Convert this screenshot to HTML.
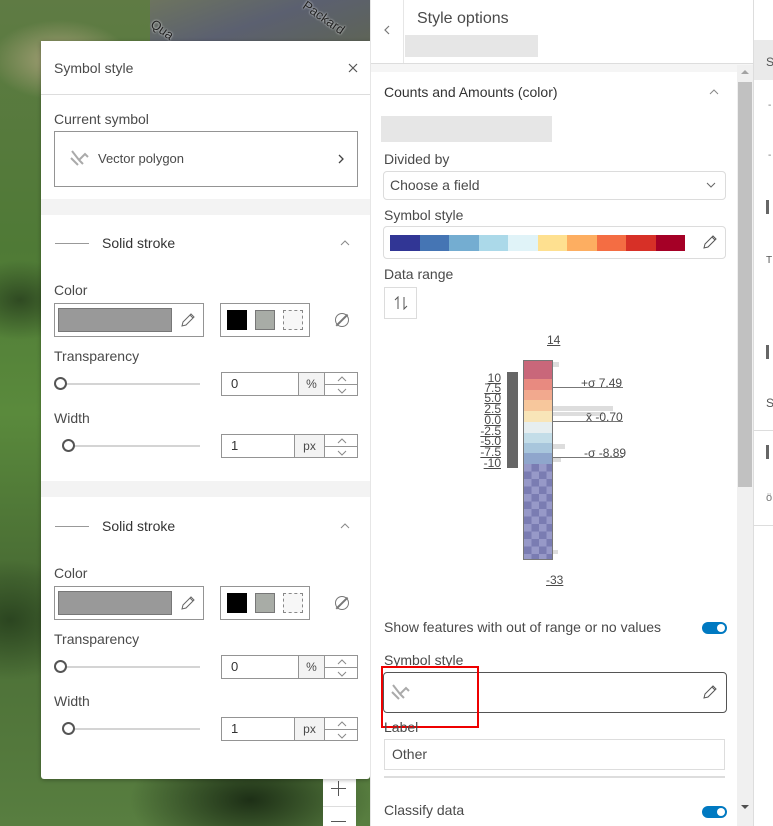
<!DOCTYPE html>
<html><head><meta charset="utf-8"><style>
*{box-sizing:border-box;margin:0;padding:0}
body{width:773px;height:826px;overflow:hidden;position:relative;font-family:"Liberation Sans",sans-serif;color:#4a4a4a;font-size:14px;background:#4d6b36}
.a{position:absolute}
svg{position:absolute}
.map{left:0;top:0;width:370px;height:826px;background:
radial-gradient(ellipse 60px 40px at 20px 300px,#2f4a22,transparent),
radial-gradient(ellipse 80px 60px at 10px 620px,#2b4520,transparent),
radial-gradient(ellipse 120px 60px at 250px 800px,#1d2f16,transparent),
radial-gradient(ellipse 70px 40px at 60px 60px,#a9a27a,transparent),
linear-gradient(180deg,#5f7b44 0%,#4f7a36 30%,#5a8a3c 50%,#496c34 70%,#587e40 100%)}
.houses{left:150px;top:0;width:220px;height:42px;background:linear-gradient(160deg,#6d745f,#5b6070 50%,#5e6457)}
.panel{left:41px;top:41px;width:329px;height:738px;background:#fff;box-shadow:0 1px 4px rgba(0,0,0,.3);border-radius:0 0 3px 3px}
.band{background:#f3f3f3;left:0;width:329px;height:16px}
.lbl{font-size:14px;color:#4a4a4a}
.box{border:1px solid #949494}
.right{left:370px;top:0;width:383px;height:826px;background:#fff;border-left:1px solid #e6e6e6}
.strip{left:753px;top:0;width:20px;height:826px;background:#fff;border-left:1px solid #ddd}
.rl{font-size:14px;color:#4a4a4a}
.sel{border:1px solid #dcdcdc;border-radius:4px}
.tog{width:25px;height:12px;border-radius:6px;background:#0079c1}
.tog:after{content:"";position:absolute;right:2px;top:2px;width:8px;height:8px;border-radius:50%;background:#fff}
.hl{font-size:12px;color:#4a4a4a;text-decoration:underline;text-align:right;width:40px;line-height:10px}
</style></head><body>
<div class="a map"></div>
<div class="a houses"></div>
<div class="a" style="left:300px;top:10px;font-size:13px;color:#222;transform:rotate(35deg);text-shadow:0 0 2px #fff">Packard</div>
<div class="a" style="left:150px;top:22px;font-size:13px;color:#222;transform:rotate(35deg);text-shadow:0 0 2px #fff">Qua</div>
<div class="a" style="left:323px;top:779px;width:33px;height:47px;background:#fff"></div>
<div class="a" style="left:323px;top:806px;width:33px;height:1px;background:#ddd"></div>
<div class="a" style="left:331px;top:788px;width:15px;height:1px;background:#555"></div>
<div class="a" style="left:338px;top:781px;width:1px;height:15px;background:#555"></div>
<div class="a" style="left:331px;top:821px;width:15px;height:1px;background:#555"></div>

<div class="a panel">
 <div class="a lbl" style="left:13px;top:19px">Symbol style</div>
 <svg style="left:307px;top:22px" width="10" height="10"><path d="M1 1 L9 9 M9 1 L1 9" stroke="#555" stroke-width="1.2"/></svg>
 <div class="a" style="left:0;top:53px;width:329px;height:1px;background:#ddd"></div>
 <div class="a lbl" style="left:13px;top:70px">Current symbol</div>
 <div class="a box" style="left:13px;top:90px;width:304px;height:56px"></div>
 <svg style="left:28px;top:108px" width="20" height="18"><path d="M3 2 L10 11 M2 9 L9 16 M10 11 L16 5 L19 8 M10 11 L14 15" stroke="#aaa" stroke-width="2" fill="none"/></svg>
 <div class="a lbl" style="left:57px;top:110px;font-size:13px">Vector polygon</div>
 <svg style="left:297px;top:113px" width="6" height="10"><path d="M1 1 L5 5 L1 9" stroke="#444" stroke-width="1.3" fill="none"/></svg>
 <div class="a band" style="top:158px"></div>

 <div class="a" style="left:14px;top:202px;width:34px;height:1px;background:#999"></div>
 <div class="a lbl" style="left:61px;top:194px;color:#333">Solid stroke</div>
 <svg style="left:299px;top:199px" width="10" height="6"><path d="M1 5 L5 1 L9 5" stroke="#888" fill="none"/></svg>
 <div class="a lbl" style="left:13px;top:241px">Color</div>
 <div class="a box" style="left:13px;top:262px;width:150px;height:34px"></div>
 <div class="a" style="left:17px;top:267px;width:114px;height:24px;background:#999;border:1px solid #777"></div>
 <svg style="left:139px;top:271px" width="16" height="16"><path d="M2 14 L3 10 L11 2 L14 5 L6 13 Z M10 3 L13 6" stroke="#666" fill="none"/></svg>
 <div class="a box" style="left:179px;top:262px;width:90px;height:34px"></div>
 <div class="a" style="left:186px;top:269px;width:20px;height:20px;background:#000"></div>
 <div class="a" style="left:214px;top:269px;width:20px;height:20px;background:#a8aca6;border:1px solid #777"></div>
 <div class="a" style="left:242px;top:269px;width:20px;height:20px;border:1px dashed #888;background:#f7f7f7"></div>
 <div class="a" style="left:294px;top:272px;width:14px;height:14px;border:1.5px solid #777;border-radius:50%"></div>
 <div class="a" style="left:300px;top:271px;width:1.5px;height:16px;background:#777;transform:rotate(45deg)"></div>
 <div class="a lbl" style="left:13px;top:307px">Transparency</div>
 <div class="a" style="left:24px;top:342px;width:135px;height:2px;background:#d4d4d4"></div>
 <div class="a" style="left:13px;top:336px;width:13px;height:13px;border:2px solid #555;border-radius:50%;background:#fff"></div>
 <div class="a box" style="left:180px;top:331px;width:137px;height:24px"></div>
 <div class="a" style="left:190px;top:335px;font-size:13px;color:#333">0</div>
 <div class="a" style="left:257px;top:332px;width:27px;height:22px;background:#f3f3f3;border-left:1px solid #949494;border-right:1px solid #949494;font-size:12px;text-align:center;line-height:22px">%</div>
 <div class="a" style="left:284px;top:343px;width:33px;height:1px;background:#949494"></div>
 <svg style="left:296px;top:335px" width="10" height="6"><path d="M1 5 L5 1 L9 5" stroke="#888" fill="none"/></svg>
 <svg style="left:296px;top:347px" width="10" height="6"><path d="M1 1 L5 5 L9 1" stroke="#888" fill="none"/></svg>
 <div class="a lbl" style="left:13px;top:369px">Width</div>
 <div class="a" style="left:30px;top:404px;width:129px;height:2px;background:#d4d4d4"></div>
 <div class="a" style="left:21px;top:398px;width:13px;height:13px;border:2px solid #555;border-radius:50%;background:#fff"></div>
 <div class="a box" style="left:180px;top:393px;width:137px;height:24px"></div>
 <div class="a" style="left:190px;top:397px;font-size:13px;color:#333">1</div>
 <div class="a" style="left:253px;top:394px;width:31px;height:22px;background:#f3f3f3;border-left:1px solid #949494;border-right:1px solid #949494;font-size:12px;text-align:center;line-height:22px">px</div>
 <div class="a" style="left:284px;top:405px;width:33px;height:1px;background:#949494"></div>
 <svg style="left:296px;top:397px" width="10" height="6"><path d="M1 5 L5 1 L9 5" stroke="#888" fill="none"/></svg>
 <svg style="left:296px;top:409px" width="10" height="6"><path d="M1 1 L5 5 L9 1" stroke="#888" fill="none"/></svg>
 <div class="a band" style="top:440px"></div>

 <div class="a" style="left:14px;top:485px;width:34px;height:1px;background:#999"></div>
 <div class="a lbl" style="left:61px;top:477px;color:#333">Solid stroke</div>
 <svg style="left:299px;top:482px" width="10" height="6"><path d="M1 5 L5 1 L9 5" stroke="#888" fill="none"/></svg>
 <div class="a lbl" style="left:13px;top:524px">Color</div>
 <div class="a box" style="left:13px;top:545px;width:150px;height:34px"></div>
 <div class="a" style="left:17px;top:550px;width:114px;height:24px;background:#999;border:1px solid #777"></div>
 <svg style="left:139px;top:554px" width="16" height="16"><path d="M2 14 L3 10 L11 2 L14 5 L6 13 Z M10 3 L13 6" stroke="#666" fill="none"/></svg>
 <div class="a box" style="left:179px;top:545px;width:90px;height:34px"></div>
 <div class="a" style="left:186px;top:552px;width:20px;height:20px;background:#000"></div>
 <div class="a" style="left:214px;top:552px;width:20px;height:20px;background:#a8aca6;border:1px solid #777"></div>
 <div class="a" style="left:242px;top:552px;width:20px;height:20px;border:1px dashed #888;background:#f7f7f7"></div>
 <div class="a" style="left:294px;top:555px;width:14px;height:14px;border:1.5px solid #777;border-radius:50%"></div>
 <div class="a" style="left:300px;top:554px;width:1.5px;height:16px;background:#777;transform:rotate(45deg)"></div>
 <div class="a lbl" style="left:13px;top:590px">Transparency</div>
 <div class="a" style="left:24px;top:625px;width:135px;height:2px;background:#d4d4d4"></div>
 <div class="a" style="left:13px;top:619px;width:13px;height:13px;border:2px solid #555;border-radius:50%;background:#fff"></div>
 <div class="a box" style="left:180px;top:614px;width:137px;height:24px"></div>
 <div class="a" style="left:190px;top:618px;font-size:13px;color:#333">0</div>
 <div class="a" style="left:257px;top:615px;width:27px;height:22px;background:#f3f3f3;border-left:1px solid #949494;border-right:1px solid #949494;font-size:12px;text-align:center;line-height:22px">%</div>
 <div class="a" style="left:284px;top:626px;width:33px;height:1px;background:#949494"></div>
 <svg style="left:296px;top:618px" width="10" height="6"><path d="M1 5 L5 1 L9 5" stroke="#888" fill="none"/></svg>
 <svg style="left:296px;top:630px" width="10" height="6"><path d="M1 1 L5 5 L9 1" stroke="#888" fill="none"/></svg>
 <div class="a lbl" style="left:13px;top:652px">Width</div>
 <div class="a" style="left:30px;top:687px;width:129px;height:2px;background:#d4d4d4"></div>
 <div class="a" style="left:21px;top:681px;width:13px;height:13px;border:2px solid #555;border-radius:50%;background:#fff"></div>
 <div class="a box" style="left:180px;top:676px;width:137px;height:24px"></div>
 <div class="a" style="left:190px;top:680px;font-size:13px;color:#333">1</div>
 <div class="a" style="left:253px;top:677px;width:31px;height:22px;background:#f3f3f3;border-left:1px solid #949494;border-right:1px solid #949494;font-size:12px;text-align:center;line-height:22px">px</div>
 <div class="a" style="left:284px;top:688px;width:33px;height:1px;background:#949494"></div>
 <svg style="left:296px;top:680px" width="10" height="6"><path d="M1 5 L5 1 L9 5" stroke="#888" fill="none"/></svg>
 <svg style="left:296px;top:692px" width="10" height="6"><path d="M1 1 L5 5 L9 1" stroke="#888" fill="none"/></svg>
</div>

<div class="a right">
 <div class="a" style="left:32px;top:0;width:1px;height:64px;background:#e6e6e6"></div>
 <svg style="left:13px;top:25px" width="6" height="10"><path d="M5 1 L1 5 L5 9" stroke="#777" stroke-width="1.2" fill="none"/></svg>
 <div class="a" style="left:46px;top:10px;font-size:16px;color:#4a4a4a">Style options</div>
 <div class="a" style="left:34px;top:35px;width:133px;height:22px;background:#e6e6e6"></div>
 <div class="a" style="left:0;top:63px;width:383px;height:9px;background:#f5f5f5;border-top:1px solid #ddd"></div>
 <div class="a" style="left:366px;top:65px;width:16px;height:761px;background:#f0f0f0"></div>
 <div class="a" style="left:367px;top:82px;width:14px;height:405px;background:#c1c1c1"></div>
 <div class="a" style="left:370px;top:70px;border:4px solid transparent;border-bottom:4px solid #a3a3a3;border-top:0"></div>
 <div class="a" style="left:370px;top:805px;border:4px solid transparent;border-top:4px solid #505050;border-bottom:0"></div>

 <div class="a rl" style="left:13px;top:84px;color:#333">Counts and Amounts (color)</div>
 <svg style="left:338px;top:89px" width="10" height="6"><path d="M1 5 L5 1 L9 5" stroke="#888" fill="none"/></svg>
 <div class="a" style="left:10px;top:116px;width:171px;height:26px;background:#e6e6e6"></div>
 <div class="a rl" style="left:13px;top:151px">Divided by</div>
 <div class="a sel" style="left:12px;top:171px;width:343px;height:29px"></div>
 <div class="a" style="left:19px;top:177px;font-size:14px;color:#4a4a4a">Choose a field</div>
 <svg style="left:335px;top:182px" width="10" height="6"><path d="M1 1 L5 5 L9 1" stroke="#666" fill="none"/></svg>
 <div class="a rl" style="left:13px;top:207px">Symbol style</div>
 <div class="a sel" style="left:12px;top:226px;width:343px;height:33px"></div>
 <div class="a" style="left:19px;top:235px;width:295px;height:16px;display:flex">
  <div style="flex:1;background:#313695"></div><div style="flex:1;background:#4575b4"></div><div style="flex:1;background:#74add1"></div><div style="flex:1;background:#abd9e9"></div><div style="flex:1;background:#e0f3f8"></div><div style="flex:1;background:#fee090"></div><div style="flex:1;background:#fdae61"></div><div style="flex:1;background:#f46d43"></div><div style="flex:1;background:#d73027"></div><div style="flex:1;background:#a50026"></div>
 </div>
 <svg style="left:331px;top:234px" width="16" height="16"><path d="M2 14 L3 10 L11 2 L14 5 L6 13 Z M10 3 L13 6" stroke="#555" fill="none"/></svg>
 <div class="a rl" style="left:13px;top:266px">Data range</div>
 <div class="a" style="left:13px;top:287px;width:33px;height:32px;border:1px solid #dcdcdc"></div>
 <svg style="left:23px;top:296px" width="14" height="14"><path d="M4 13 L4 1 L1 4 M10 1 L10 13 L13 10" stroke="#555" fill="none"/></svg>

 <div class="a" style="left:176px;top:333px;font-size:12px;text-decoration:underline">14</div>
 <div class="a" style="left:152px;top:360px;width:30px;height:200px;border:1px solid #777;overflow:hidden">
  <div style="height:18px;background:#c9677a"></div>
  <div style="height:11px;background:#e88a80"></div>
  <div style="height:10px;background:#f2a98e"></div>
  <div style="height:11px;background:#f7c79c"></div>
  <div style="height:11px;background:#f8e5b8"></div>
  <div style="height:11px;background:#e6eef0"></div>
  <div style="height:10px;background:#c3dde8"></div>
  <div style="height:10px;background:#a8c6dc"></div>
  <div style="height:11px;background:#8fa6cc"></div>
  <div style="height:97px;background:repeating-conic-gradient(#7a7cb2 0 25%,#9799c8 0 50%) 0 0/15px 15px"></div>
 </div>
 <div class="a" style="left:182px;top:362px;width:6px;height:5px;background:#ddd"></div>
 <div class="a" style="left:182px;top:406px;width:60px;height:5px;background:#ddd"></div>
 <div class="a" style="left:182px;top:412px;width:50px;height:4px;background:#ddd"></div>
 <div class="a" style="left:182px;top:444px;width:12px;height:5px;background:#ddd"></div>
 <div class="a" style="left:182px;top:458px;width:8px;height:4px;background:#ddd"></div>
 <div class="a" style="left:182px;top:550px;width:5px;height:4px;background:#ddd"></div>
 <div class="a" style="left:136px;top:372px;width:11px;height:96px;background:#666"></div>
 <div class="a" style="left:182px;top:387px;width:70px;height:1px;background:#777"></div>
 <div class="a" style="left:182px;top:421px;width:70px;height:1px;background:#777"></div>
 <div class="a" style="left:182px;top:457px;width:70px;height:1px;background:#777"></div>
 <div class="a" style="left:210px;top:376px;font-size:12px">+σ 7.49</div>
 <div class="a" style="left:215px;top:410px;font-size:12px">x̄ -0.70</div>
 <div class="a" style="left:213px;top:446px;font-size:12px">-σ -8.89</div>
 <div class="a hl" style="left:90px;top:373px">10</div>
 <div class="a hl" style="left:90px;top:383px">7.5</div>
 <div class="a hl" style="left:90px;top:393px">5.0</div>
 <div class="a hl" style="left:90px;top:404px">2.5</div>
 <div class="a hl" style="left:90px;top:415px">0.0</div>
 <div class="a hl" style="left:90px;top:426px">-2.5</div>
 <div class="a hl" style="left:90px;top:436px">-5.0</div>
 <div class="a hl" style="left:90px;top:447px">-7.5</div>
 <div class="a hl" style="left:90px;top:458px">-10</div>
 <div class="a" style="left:175px;top:573px;font-size:12px;text-decoration:underline">-33</div>

 <div class="a rl" style="left:13px;top:619px">Show features with out of range or no values</div>
 <div class="a tog" style="left:331px;top:622px"></div>
 <div class="a rl" style="left:13px;top:652px">Symbol style</div>
 <div class="a" style="left:12px;top:672px;width:344px;height:41px;border:1px solid #555;border-radius:4px"></div>
 <svg style="left:19px;top:683px" width="20" height="18"><path d="M3 2 L10 11 M2 9 L9 16 M10 11 L16 5 L19 8 M10 11 L14 15" stroke="#aaa" stroke-width="2" fill="none"/></svg>
 <svg style="left:331px;top:684px" width="16" height="16"><path d="M2 14 L3 10 L11 2 L14 5 L6 13 Z M10 3 L13 6" stroke="#555" fill="none"/></svg>
 <div class="a" style="left:10px;top:666px;width:98px;height:62px;border:2px solid #e00"></div>
 <div class="a rl" style="left:13px;top:719px">Label</div>
 <div class="a" style="left:13px;top:739px;width:341px;height:31px;border:1px solid #ddd"></div>
 <div class="a" style="left:21px;top:746px;font-size:14px">Other</div>
 <div class="a" style="left:13px;top:776px;width:341px;height:2px;background:#ddd"></div>
 <div class="a rl" style="left:13px;top:802px">Classify data</div>
 <div class="a tog" style="left:331px;top:806px"></div>
</div>

<div class="a strip">
 <div class="a" style="left:0;top:40px;width:20px;height:40px;background:#eaeaea"></div>
 <div class="a" style="left:0;top:430px;width:20px;height:1px;background:#ddd"></div>
 <div class="a" style="left:0;top:525px;width:20px;height:1px;background:#ddd"></div>
 <div class="a" style="left:12px;top:55px;font-size:12px;color:#555">S</div>
 <div class="a" style="left:14px;top:100px;font-size:10px;color:#777">-</div>
 <div class="a" style="left:14px;top:150px;font-size:10px;color:#777">-</div>
 <div class="a" style="left:12px;top:200px;width:3px;height:14px;background:#666"></div>
 <div class="a" style="left:12px;top:255px;font-size:10px;color:#555">T</div>
 <div class="a" style="left:12px;top:345px;width:3px;height:14px;background:#666"></div>
 <div class="a" style="left:12px;top:396px;font-size:12px;color:#555">S</div>
 <div class="a" style="left:12px;top:445px;width:3px;height:14px;background:#666"></div>
 <div class="a" style="left:12px;top:492px;font-size:11px;color:#777">ö</div>
</div>
</body></html>
